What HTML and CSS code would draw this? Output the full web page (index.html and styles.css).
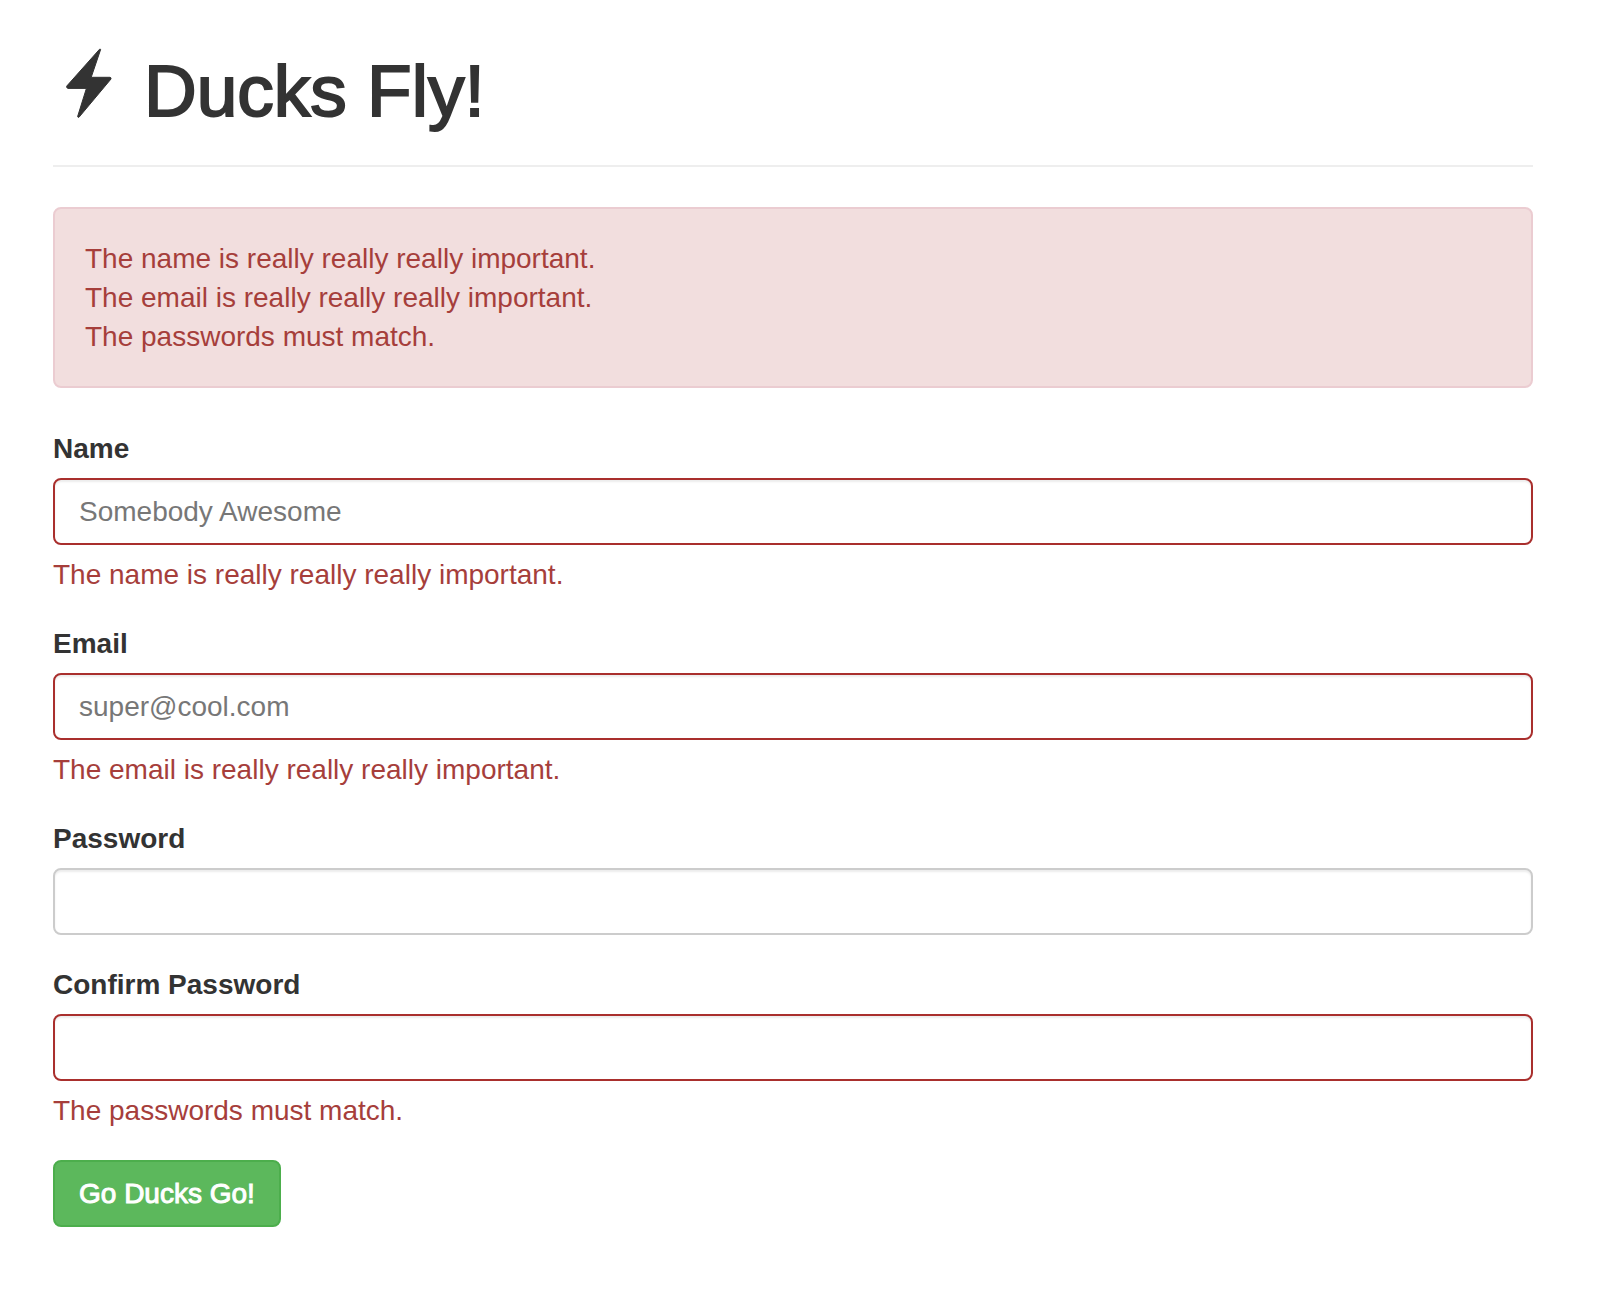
FILE: index.html
```html
<!DOCTYPE html>
<html lang="en">
<head>
    <meta charset="UTF-8">
    <meta name="viewport" content="width=device-width, initial-scale=1.0">
    <title>Ducks Fly!</title>
    <link rel="stylesheet" href="styles.css">
</head>
<body>
    <div class="container">
        <header class="page-header">
            <h1>
                <svg class="icon-flash" viewBox="0 0 71 71" aria-hidden="true">
                    <path d="M46.6 1.2 L13.8 38 Q13 39.8 15 40.4 L33.4 40.4 L24.6 68.6 Q25 70 26.2 69 L58 31 Q58.4 29.6 57 29.3 L38.2 29.3 L47.6 1.6 Q47.4 .6 46.6 1.2 Z"/>
                </svg>
                <span>Ducks Fly!</span>
            </h1>
        </header>

        <!-- Error summary -->
        <div class="alert" role="alert">
            <p>The name is really really really important.</p>
            <p>The email is really really really important.</p>
            <p>The passwords must match.</p>
        </div>

        <form action="#" method="post" novalidate>
            <div class="form-group has-error">
                <label for="name">Name</label>
                <input type="text" id="name" name="name" class="form-control" placeholder="Somebody Awesome">
                <p class="help-block">The name is really really really important.</p>
            </div>

            <div class="form-group has-error">
                <label for="email">Email</label>
                <input type="email" id="email" name="email" class="form-control" placeholder="super@cool.com">
                <p class="help-block">The email is really really really important.</p>
            </div>

            <div class="form-group">
                <label for="password">Password</label>
                <input type="password" id="password" name="password" class="form-control">
            </div>

            <div class="form-group has-error">
                <label for="password_confirm">Confirm Password</label>
                <input type="password" id="password_confirm" name="password_confirm" class="form-control">
                <p class="help-block">The passwords must match.</p>
            </div>

            <button type="submit" class="btn btn-success">Go Ducks Go!</button>
        </form>
    </div>
</body>
</html>
```
FILE: styles.css
```css
:root {
    --text-color: #333;
    --error-color: #a63e3b;
    --error-border: #a92f2d;
    --error-background: #f2dede;
    --success-color: #5cb85c;
    --border-radius: 8px;
    --font-family: "Liberation Sans", Arial, sans-serif;
}

* {
    box-sizing: border-box;
}

body {
    margin: 0;
    font-family: var(--font-family);
    font-size: 28px;
    line-height: 39px;
    color: var(--text-color);
    background-color: #fff;
}

.container {
    padding: 48px 67px 60px 53px;
}

.page-header {
    padding-bottom: 31px;
    margin-bottom: 40px;
    border-bottom: 2px solid #eee;
}

.page-header h1 {
    display: flex;
    align-items: flex-start;
    gap: 20px;
    margin: 0;
    font-size: 73px;
    line-height: 86px;
    font-weight: 400;
    -webkit-text-stroke: 2px var(--text-color);
}

.icon-flash {
    flex: none;
    width: 71px;
    height: 71px;
    fill: var(--text-color);
    stroke: var(--text-color);
    stroke-width: 1;
    stroke-linejoin: round;
}

.alert {
    padding: 30px;
    margin-bottom: 41px;
    color: var(--error-color);
    background-color: var(--error-background);
    border: 2px solid #ebccd1;
    border-radius: var(--border-radius);
}

.alert p {
    margin: 0;
}

.form-group {
    margin-bottom: 30px;
}

.form-group label {
    display: block;
    margin-bottom: 10px;
    font-weight: bold;
}

.form-control {
    display: block;
    width: 100%;
    height: 67px;
    padding: 12px 24px;
    font-family: inherit;
    font-size: 28px;
    line-height: 39px;
    color: #555;
    background-color: #fff;
    border: 2px solid #ccc;
    border-radius: var(--border-radius);
    box-shadow: inset 0 2px 2px rgba(0, 0, 0, 0.075);
}

.form-control::placeholder {
    color: #777;
    opacity: 1;
}

.help-block {
    margin: 10px 0 0;
}

.has-error .form-control {
    border-color: var(--error-border);
}

.has-error .help-block {
    color: var(--error-color);
}

.btn {
    display: inline-block;
    padding: 12px 24px;
    font-family: inherit;
    font-size: 28px;
    line-height: 39px;
    border: 2px solid transparent;
    border-radius: var(--border-radius);
    cursor: pointer;
}

.btn-success {
    color: #fff;
    background-color: var(--success-color);
    border-color: #4cae4c;
    -webkit-text-stroke: 1px #fff;
}

.btn-success:hover {
    background-color: #449d44;
}
```
